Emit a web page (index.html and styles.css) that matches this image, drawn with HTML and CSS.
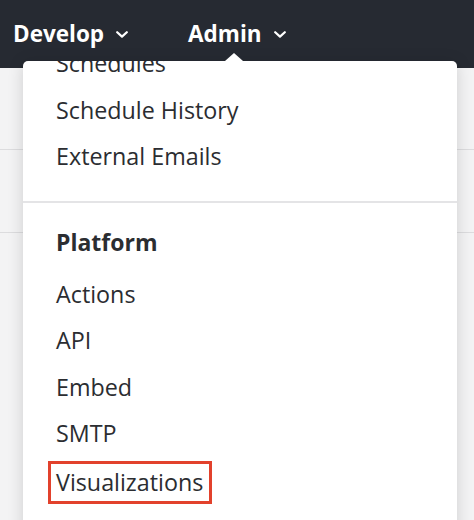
FILE: index.html
```html
<!DOCTYPE html>
<html lang="en">
<head>
<meta charset="utf-8">
<title>Admin menu</title>
<link rel="stylesheet" href="styles.css">
</head>
<body>
<header class="topbar">
  <nav class="nav">
    <div class="nav-item">Develop
      <svg class="chev" viewBox="0 0 12 7" width="12" height="7"><path d="M1.2 1.2 L6 5.6 L10.8 1.2" fill="none" stroke="#fff" stroke-width="2.2" stroke-linecap="round" stroke-linejoin="round"/></svg>
    </div>
    <div class="nav-item admin">Admin
      <svg class="chev" viewBox="0 0 12 7" width="12" height="7"><path d="M1.2 1.2 L6 5.6 L10.8 1.2" fill="none" stroke="#fff" stroke-width="2.2" stroke-linecap="round" stroke-linejoin="round"/></svg>
    </div>
  </nav>
</header>
<main class="page">
  <div class="page-row first"></div>
  <div class="page-row"></div>
</main>
<div class="dropdown">
  <div class="menu-scroll">
    <ul class="menu">
      <li class="item">Schedules</li>
      <li class="item">Schedule History</li>
      <li class="item">External Emails</li>
    </ul>
    <div class="sep"></div>
    <ul class="menu">
      <li class="heading">Platform</li>
      <li class="item">Actions</li>
      <li class="item">API</li>
      <li class="item">Embed</li>
      <li class="item">SMTP</li>
      <li class="item last"><span class="highlight">Visualizations</span></li>
    </ul>
  </div>
</div>
</body>
</html>
```
FILE: styles.css
```css
html, body {
  margin: 0;
  padding: 0;
}
body {
  width: 474px;
  height: 520px;
  overflow: hidden;
  position: relative;
  background: #f3f3f4;
  font-family: "Open Sans", "Noto Sans", sans-serif;
  color: #2b2d31;
}
.topbar {
  height: 68px;
  background: #262a32;
  box-sizing: border-box;
}
.nav {
  display: flex;
  align-items: center;
  height: 68px;
  padding-left: 13px;
  padding-bottom: 2px;
  box-sizing: border-box;
  gap: 60px;
}
.nav-item {
  color: #fff;
  font-weight: 700;
  font-size: 22.5px;
  display: flex;
  align-items: center;
  gap: 12px;
}
.chev {
  display: block;
  margin-top: 2px;
}
.page-row {
  height: 82px;
  border-bottom: 1px solid #dcdcde;
}
.page-row.first {
  height: 81px;
}
.dropdown {
  position: absolute;
  left: 23px;
  top: 61px;
  width: 434px;
  height: 480px;
  background: #fff;
  border-radius: 5px;
  box-shadow: 0 2px 16px rgba(0, 0, 0, 0.15);
}
.dropdown::before {
  content: "";
  position: absolute;
  left: 202px;
  top: -8px;
  border-left: 9px solid transparent;
  border-right: 9px solid transparent;
  border-bottom: 8px solid #fff;
}
.menu-scroll {
  height: 100%;
  overflow: hidden;
  border-radius: 5px;
}
.menu {
  list-style: none;
  margin: 0;
  padding: 0;
}
.menu:first-child {
  margin-top: -21px;
  padding-bottom: 21px;
}
.item {
  font-size: 23.3px;
  line-height: 46.5px;
  padding-left: 33px;
}
.item.last {
  padding-top: 2px;
}
.heading {
  font-size: 23px;
  font-weight: 700;
  line-height: 46px;
  padding-left: 33px;
  margin-top: 16px;
  margin-bottom: 6px;
}
.sep {
  height: 2px;
  background: #e4e4e6;
}
.highlight {
  display: inline-block;
  border: 3px solid #e2412c;
  padding: 0 6px 0 5px;
  margin-left: -8px;
  line-height: 37px;
}
```
